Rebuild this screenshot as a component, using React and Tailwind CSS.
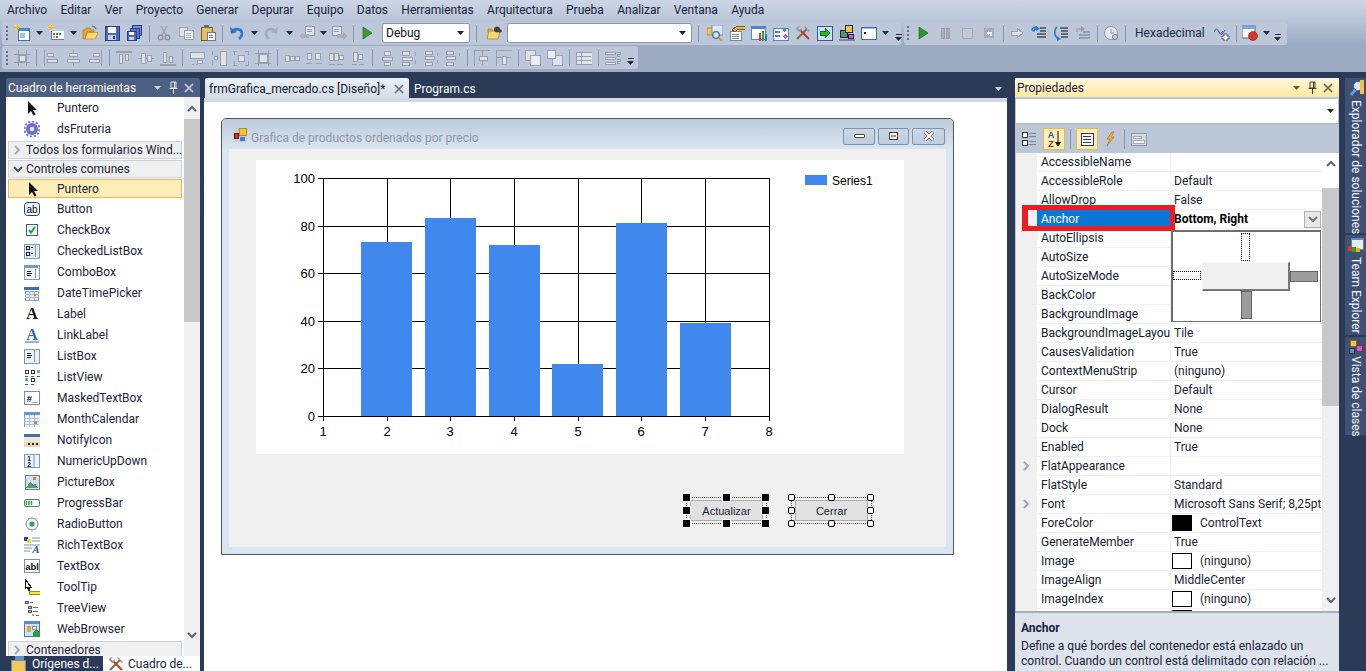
import React from "react";

const Svg = ({ children, w = 16, h = 16 }) => (
  <svg width={w} height={h} viewBox={`0 0 ${w} ${h}`} className="shrink-0 block" shapeRendering="crispEdges">{children}</svg>
);
const Soft = ({ children, w = 16, h = 16 }) => (
  <svg width={w} height={h} viewBox={`0 0 ${w} ${h}`} className="shrink-0 block">{children}</svg>
);

/* ---- toolbar icons ---- */
const NewProj = () => (
  <Svg><rect x="4" y="3" width="11" height="12" fill="#fff" stroke="#3a6ea8" /><rect x="4" y="3" width="11" height="3" fill="#4d86c8" /><rect x="6" y="8" width="5" height="5" fill="#9ec3ea" /><path d="M1 0h4v4H1z" fill="#ffd94a" /><path d="M0 2h6M3 0v5" stroke="#f5b400" /></Svg>
);
const NewItem = () => (
  <Svg><rect x="3" y="4" width="13" height="10" fill="#fff" stroke="#5a7aa5" /><rect x="3" y="4" width="13" height="2" fill="#bcd0ea" /><rect x="5" y="8" width="2" height="2" fill="#e33" /><rect x="8" y="8" width="2" height="2" fill="#2a2" /><rect x="11" y="8" width="2" height="2" fill="#27c" /><rect x="5" y="11" width="2" height="2" fill="#ea2" /><rect x="8" y="11" width="2" height="2" fill="#a3c" /><path d="M1 0h4v4H1z" fill="#ffd94a" /><path d="M0 2h6M3 0v5" stroke="#f5b400" /></Svg>
);
const Folder = () => (
  <Soft><path d="M1 14V5h2l1-2h4l1 2h3v2H5L3 14z" fill="#e3a92e" stroke="#a9781c" strokeWidth=".7" /><path d="M3 14l2.500-6.500H16L13.500 14z" fill="#fbd871" stroke="#b88a25" strokeWidth=".7" /><path d="M10 1c2 0 3 1 4 3" stroke="#3f7ec4" strokeWidth="1.200" fill="none" /></Soft>
);
const Save = () => (
  <Svg><rect x="1" y="1" width="14" height="14" fill="#4f68bd" stroke="#2a3b85" /><rect x="4" y="2" width="8" height="6" fill="#fff" /><rect x="4" y="10" width="8" height="5" fill="#c7cfe5" /><rect x="9" y="11" width="2" height="3" fill="#2a3b85" /></Svg>
);
const SaveAll = () => (
  <Svg><rect x="6" y="0" width="9" height="10" fill="#7d90cf" stroke="#2a3b85" /><rect x="4" y="3" width="9" height="10" fill="#5d74c4" stroke="#2a3b85" /><rect x="1" y="6" width="9" height="9" fill="#4f68bd" stroke="#2a3b85" /><rect x="3" y="7" width="5" height="3" fill="#fff" /><rect x="3" y="12" width="5" height="3" fill="#c7cfe5" /></Svg>
);
const Cut = () => (
  <Soft><path d="M5 1l5 9M11 1L6 10" stroke="#9aa0aa" strokeWidth="1.500" /><circle cx="4.500" cy="12.500" r="2.300" fill="none" stroke="#8b919c" strokeWidth="1.400" /><circle cx="11.500" cy="12.500" r="2.300" fill="none" stroke="#8b919c" strokeWidth="1.400" /></Soft>
);
const Copy = () => (
  <Svg><rect x="1" y="2" width="8" height="9" fill="#dfe3ea" stroke="#9aa0aa" /><rect x="6" y="5" width="9" height="9" fill="#eef0f4" stroke="#9aa0aa" /><path d="M8 8h5M8 10h5M8 12h5" stroke="#a9afb9" /></Svg>
);
const Paste = () => (
  <Svg><rect x="1" y="2" width="11" height="13" fill="#e8c05a" stroke="#7c5a1a" /><rect x="4" y="0" width="5" height="3" fill="#5c6b82" /><rect x="7" y="7" width="8" height="8" fill="#fff" stroke="#6b7a92" /><path d="M9 10h4M9 12h4" stroke="#6b7a92" /></Svg>
);
const Undo = ({ c = "#2b78c9" }) => (
  <Soft><path d="M3 7c2-4 9-4 10 1 .5 2.500-1 4-3 6" fill="none" stroke={c} strokeWidth="2.600" /><path d="M1 2l1 7 6-2z" fill={c} /></Soft>
);
const Redo = () => (
  <Soft><path d="M13 7C11 3 4 3 3 8c-.5 2.500 1 4 3 6" fill="none" stroke="#a4acb9" strokeWidth="2.600" /><path d="M15 2l-1 7-6-2z" fill="#a4acb9" /></Soft>
);
const NavBack = () => (
  <Svg><rect x="6" y="1" width="9" height="9" fill="#e3e6ec" stroke="#8f97a5" /><path d="M8 4h5M8 6h5" stroke="#8f97a5" /><path d="M0 11l4-4v2h6v4H4v2z" fill="#a9b0bc" /></Svg>
);
const NavFwd = () => (
  <Svg><rect x="1" y="1" width="9" height="9" fill="#e3e6ec" stroke="#8f97a5" /><path d="M3 4h5M3 6h5" stroke="#8f97a5" /><path d="M16 11l-4-4v2H6v4h6v2z" fill="#a9b0bc" /></Svg>
);
const Play = ({ c = "#3a9b2f" }) => (
  <Soft><path d="M4 2l9 6-9 6z" fill={c} stroke="#1f6b1a" strokeWidth=".7" /></Soft>
);
const FindFolder = () => (
  <Soft><path d="M1 14l2-8h11l-2 8z" fill="#fbd871" stroke="#a9781c" strokeWidth=".7" /><path d="M2 8V4h4l1 2" fill="#e3a92e" stroke="#a9781c" strokeWidth=".7" /><circle cx="11" cy="4.500" r="3" fill="#444" /><circle cx="14" cy="6" r="1.800" fill="#444" /></Soft>
);
const Magnify = () => (
  <Soft><rect x="0" y="3" width="10" height="7" fill="#f2c453" stroke="#a9781c" strokeWidth=".7" /><rect x="5" y="0" width="11" height="10" fill="#dfe9f6" stroke="#3d6ea8" strokeWidth=".7" /><circle cx="9" cy="10" r="3.300" fill="#cfe6fb" stroke="#49698f" strokeWidth="1.300" /><path d="M11.500 12.500L15 16" stroke="#d39a2b" strokeWidth="2" /></Soft>
);
const HandDoc = () => (
  <Svg><rect x="1" y="6" width="11" height="9" fill="#fff" stroke="#7a8aa0" /><path d="M3 9h7M3 11h7M3 13h7" stroke="#7a8aa0" /><path d="M3 5l5-4h8v3H9L6 7z" fill="#e9b64a" stroke="#7c5a1a" /></Svg>
);
const ChartWin = () => (
  <Svg><rect x="0" y="1" width="14" height="13" fill="#fff" stroke="#5b86bb" /><rect x="0" y="1" width="14" height="3" fill="#4d86c8" /><rect x="8" y="8" width="2" height="8" fill="#e33" /><rect x="11" y="6" width="2" height="10" fill="#2a2" /><rect x="14" y="9" width="2" height="7" fill="#27c" /></Svg>
);
const Sparkle = () => (
  <Svg><rect x="0" y="3" width="15" height="12" fill="#f4f6fa" stroke="#5b86bb" /><rect x="2" y="6" width="5" height="2" fill="#4d86c8" /><rect x="2" y="10" width="5" height="2" fill="#4d86c8" /><path d="M9 5l2-2 2 2-2 2z" fill="#39c" /><path d="M10 11l2-2 3 2-3 3z" fill="#d65bc0" /></Svg>
);
const Tools = () => (
  <Soft><path d="M2 14L12 4" stroke="#8a6a3a" strokeWidth="2" /><path d="M9 2l5 5 1-1-5-5z" fill="#8f97a5" /><path d="M14 14L5 5" stroke="#c0392b" strokeWidth="2" /><path d="M1 4c0-2 2-3 4-3L3 3l2 2 2-2c0 2-1 4-3 4z" fill="#8f97a5" /></Soft>
);
const GreenArrow = () => (
  <Svg><rect x="0" y="1" width="15" height="14" fill="#cfe0f3" stroke="#2d5f9e" /><path d="M3 6h5V3l5 5-5 5v-3H3z" fill="#27b52a" stroke="#14691a" /></Svg>
);
const Blocks = () => (
  <Svg><rect x="1" y="5" width="7" height="7" fill="#4d9c66" stroke="#224" /><rect x="6" y="0" width="7" height="7" fill="#f2c43f" stroke="#224" /><rect x="9" y="9" width="5" height="4" fill="#e85bc0" stroke="#224" /><rect x="0" y="14" width="16" height="2" fill="#7b8696" /></Svg>
);
const Cmd = () => (
  <Svg><rect x="0" y="2" width="15" height="12" fill="#fff" stroke="#3d6ea8" /><rect x="1" y="3" width="13" height="1" fill="#9ec3ea" /><path d="M3 7l2 1-2 1" stroke="#111" fill="none" /></Svg>
);
const Pause = () => (
  <Svg><rect x="4" y="3" width="3" height="10" fill="#a9b0bc" stroke="#98a0ae" /><rect x="9" y="3" width="3" height="10" fill="#a9b0bc" stroke="#98a0ae" /></Svg>
);
const Stop = () => <Svg><rect x="3" y="3" width="10" height="10" fill="#c5cad3" stroke="#a4acb9" /></Svg>;
const Restart = () => (
  <Svg><rect x="3" y="3" width="10" height="10" fill="#a4acb9" /><path d="M11 11V7H8V5L5 8l3 3V9h1v2z" fill="#eef0f4" /></Svg>
);
const ArrowStep = () => <Svg><path d="M2 6h6V3l6 5-6 5v-3H2z" fill="#dfe3ea" stroke="#98a0ae" /></Svg>;
const StepInto = () => (
  <Soft><path d="M6 2c-3 0-5 1-5 3l2 1 1-2h3" fill="none" stroke="#2b78c9" strokeWidth="1.500" /><path d="M9 4L5 1v5z" fill="#2b78c9" /><path d="M9 3h6M9 6h6M6 9h9M6 12h9" stroke="#111" /></Soft>
);
const StepOver = () => (
  <Soft><path d="M4 2C1 4 1 12 5 13" fill="none" stroke="#2b78c9" strokeWidth="1.500" /><path d="M8 14l-4 2v-5z" fill="#2b78c9" /><path d="M7 3h8M8 6h7M8 9h7M8 12h7" stroke="#111" /></Soft>
);
const StepOut = () => (
  <Soft><path d="M2 7V4h5" fill="none" stroke="#98a0ae" strokeWidth="1.500" /><path d="M6 1l4 3-4 3z" fill="#98a0ae" /><path d="M8 7h7M4 10h11M4 13h11" stroke="#6d7480" /></Soft>
);
const ClockSearch = () => (
  <Soft><circle cx="8" cy="8" r="6.500" fill="#e4e7ec" stroke="#8f97a5" /><path d="M8 4v4h3" stroke="#8f97a5" fill="none" /><circle cx="12" cy="12" r="2.500" fill="#cfd5de" stroke="#6d7480" /></Soft>
);
const Wave = () => (
  <Soft><path d="M0 7c2-4 3-4 5 0s3 3 6-2" fill="none" stroke="#2b78c9" strokeWidth="1.200" /><path d="M4 6c2 3 3 3 5 0" fill="none" stroke="#d33" strokeWidth="1" /><path d="M10 9h3v2h2v3h-2v2h-3v-2H8v-3h2z" fill="#eee" stroke="#444" strokeWidth=".8" /></Soft>
);
const Breakpoint = () => (
  <Soft><rect x="0" y="1" width="13" height="12" fill="#fff" stroke="#3d6ea8" /><rect x="0" y="1" width="13" height="3" fill="#7aa7dc" /><circle cx="11" cy="11" r="4.500" fill="#d9332b" stroke="#8c1c17" strokeWidth=".6" /></Soft>
);

/* row two, greyed layout icons */
const G = "#97a0b0";
const Gy = ({ d, fill }) => (
  <Svg><path d={d} fill="none" stroke={G} />{fill && <path d={fill} fill="#dde1e8" stroke={G} />}</Svg>
);
const gridIcons = [
  { d: "M0 4h16M0 12h16M4 0v16M12 0v16", fill: "M5 5h6v6H5z" },
  { d: "M1.500 0v16M1 0v16", fill: "M4 3h6v3H4zM4 9h10v3H4z" },
  { d: "M8 0v16", fill: "M4 3h8v3H4zM2 9h12v3H2z" },
  { d: "M14.500 0v16M14 0v16", fill: "M6 3h6v3H6zM2 9h10v3H2z" },
  { d: "M0 1h16M0 2h16", fill: "M3 4h3v9H3zM9 4h3v6H9z" },
  { d: "M0 8h16", fill: "M3 3h4v10H3zM9 5h4v6H9z" },
  { d: "M0 14h16M0 15h16", fill: "M3 2h3v10H3zM9 6h3v6H9z" },
  { d: "M3 14h2M7 14h2", fill: "M1 2h14v6H1zM8 10h5v3H8z" },
  { d: "M1 1v4M1 10v5", fill: "M9 1h6v14H9zM3 6h3v3H3z" },
  { d: "M0 1h4M12 1h4M0 15h4M12 15h4M1 1v4M15 1v4M1 11v4M15 11v4", fill: "M5 5h6v6H5z" },
  { d: "M0 3h16M0 13h16M3 0v16M13 0v16", fill: "M4 4h8v8H4z" },
  { d: "", fill: "M1 5h4v6H1zM6 6h4v4H6zM11 6h4v4h-4z" },
  { d: "M0 13h6M10 13h6", fill: "M1 3h4v6H1zM9 3h5v6H9z" },
  { d: "M1 14h6M9 14h6", fill: "M1 3h4v7H1zM6 3h4v7H6zM11 5h4v4h-4z" },
  { d: "M2 14h5M9 14h5", fill: "M3 2h4v9H3zM8 4h4v5H8z" },
  { d: "", fill: "M5 1h6v4H5zM3 7h10v3H3zM5 12h6v3H5z" },
  { d: "M14 2v4M14 10v4", fill: "M1 1h7v4H1zM1 7h10v3H1zM1 12h7v3H1z" },
  { d: "M14 3v3M14 10v3", fill: "M2 1h7v3H2zM2 6h9v3H2zM2 12h7v3H2z" },
  { d: "M14 3v3", fill: "M1 1h7v3H1zM1 6h9v3H1zM1 12h7v3H1z" },
];
const CenterH = () => <Svg><rect x="0" y="0" width="16" height="16" fill="none" stroke={G} /><path d="M8 1v14" stroke={G} /><rect x="5" y="6" width="8" height="4" fill="#dde1e8" stroke={G} /></Svg>;
const CenterV = () => <Svg><rect x="0" y="0" width="16" height="16" fill="none" stroke={G} /><path d="M1 7h14" stroke={G} /><rect x="6" y="6" width="4" height="8" fill="#dde1e8" stroke={G} /></Svg>;
const Front = () => <Svg><rect x="0" y="0" width="10" height="10" fill="#dde1e8" stroke={G} /><rect x="5" y="5" width="10" height="10" fill="#e9ecf1" stroke={G} /></Svg>;
const Back = () => <Svg><rect x="5" y="5" width="10" height="10" fill="#dde1e8" stroke={G} /><rect x="0" y="0" width="8" height="8" fill="#e9ecf1" stroke={G} /></Svg>;
const Tabs = () => <Svg><rect x="0" y="2" width="16" height="12" fill="#e0e4eb" stroke={G} /><path d="M1 6h14M1 10h14M5 2v12" stroke={G} /></Svg>;
const TabOrder = () => <Svg><path d="M0 2h10v2H0zM0 7h10v2H0zM0 12h10v2H0z" fill="#e0e4eb" stroke={G} /><path d="M12 2h3v2h-3v2h3M12 9h3v2h-3v2h3" stroke={G} fill="none" /></Svg>;

/* ---- toolbox icons ---- */
const Pointer = () => <Soft><path d="M4 1v13l3-3 2.500 4.500 2-1L9 10h4z" fill="#111" /></Soft>;
const Gear = () => (
  <Soft><circle cx="8" cy="8" r="6" fill="#6a6ed0" /><circle cx="8" cy="8" r="7.500" fill="none" stroke="#7478d8" strokeWidth="2.200" strokeDasharray="2.200 1.700" /><circle cx="8" cy="8" r="2.300" fill="#e8e9fb" /></Soft>
);
const BtnIc = () => (
  <svg width="16" height="14" viewBox="0 0 16 14" className="block"><rect x=".5" y=".5" width="15" height="13" rx="3" fill="#eef3f9" stroke="#1e3f68" /><text x="8" y="11" textAnchor="middle" fontSize="10" fontFamily="Liberation Sans, sans-serif" fill="#111">ab</text></svg>
);
const CheckIc = () => <Soft><rect x="2.500" y="2.500" width="11" height="11" fill="#f4f7fb" stroke="#3d6089" /><path d="M5 8l2 2.500L11 5" fill="none" stroke="#23a02a" strokeWidth="2" /></Soft>;
const CheckList = () => <Svg><rect x="0" y="1" width="15" height="14" fill="#e4ecf5" stroke="#7e9ab9" /><rect x="2" y="3" width="3" height="3" fill="#fff" stroke="#223" /><rect x="2" y="9" width="3" height="3" fill="#fff" stroke="#223" /><path d="M7 4h2M7 10h2" stroke="#223" /><path d="M11 2v12" stroke="#7e9ab9" /></Svg>;
const Combo = () => <Svg><rect x="0" y="1" width="15" height="14" fill="#f2f5f9" stroke="#7e9ab9" /><rect x="1" y="2" width="13" height="2" fill="#7e9ab9" /><path d="M3 7h4M3 9h5M3 11h4" stroke="#111" /><path d="M11 5v9" stroke="#7e9ab9" /></Svg>;
const DateP = () => <Svg><rect x="0" y="2" width="15" height="3" fill="#3d6ea8" /><rect x="1" y="6" width="13" height="9" fill="#e8edf4" stroke="#8fa5bf" /><path d="M1 9h13M1 12h13M5 6v9M10 6v9" stroke="#a9b8cb" /><rect x="10" y="9" width="2" height="2" fill="#e06a3a" /></Svg>;
const LabelA = ({ c = "#111", u }) => (
  <svg width="16" height="16" viewBox="0 0 16 16" className="block"><text x="8" y="13" textAnchor="middle" fontSize="16" fontWeight="700" fontFamily="Liberation Serif, serif" fill={c}>A</text>{u && <path d="M1 15h14" stroke={c} />}</svg>
);
const ListB = () => <Svg><rect x="0" y="1" width="15" height="14" fill="#eef2f7" stroke="#7e9ab9" /><path d="M3 5h4M3 7h5M3 9h4" stroke="#111" /><path d="M10 2v12" stroke="#7e9ab9" /></Svg>;
const ListV = () => <Svg><rect x="1" y="1" width="3" height="3" fill="#fff" stroke="#333" /><rect x="7" y="1" width="3" height="3" fill="#fff" stroke="#333" /><rect x="13" y="1" width="3" height="3" fill="#6ac" /><rect x="1" y="9" width="3" height="3" fill="#6ac" /><rect x="7" y="9" width="3" height="3" fill="#fff" stroke="#333" /><path d="M1 7h3M7 7h3M13 7h3M1 15h3M7 15h3" stroke="#556" /></Svg>;
const TxtBox = ({ t }) => (
  <svg width="16" height="14" viewBox="0 0 16 14" className="block"><rect x=".5" y=".5" width="15" height="13" fill="#fff" stroke="#7e8ea5" /><text x="8" y="10.500" textAnchor="middle" fontSize="9.500" fontWeight="700" fontFamily="Liberation Sans, sans-serif" fill="#111">{t}</text></svg>
);
const MonthC = () => <Svg><rect x="0" y="1" width="16" height="15" fill="#eaf0f7" stroke="#8ea6c6" /><rect x="0" y="1" width="16" height="3" fill="#6a94cc" /><path d="M1 7h14M1 10h14M1 13h14M5 4v12M10 4v12" stroke="#b2c2d6" /><rect x="10" y="10" width="3" height="3" fill="#e0763d" /></Svg>;
const Notify = () => <Svg><rect x="0" y="2" width="16" height="3" fill="#3d6ea8" /><rect x="0" y="5" width="16" height="5" fill="#f1e9cf" /><rect x="0" y="10" width="16" height="5" fill="#e6d9b0" /><rect x="4" y="11" width="2" height="2" fill="#224" /><rect x="8" y="11" width="2" height="2" fill="#224" /><rect x="12" y="11" width="2" height="2" fill="#224" /></Svg>;
const Numeric = () => (
  <svg width="16" height="16" viewBox="0 0 16 16" className="block"><rect x=".5" y="1.500" width="15" height="13" fill="#eef2f7" stroke="#7e9ab9" /><text x="5" y="7.500" textAnchor="middle" fontSize="6.500" fontWeight="700" fontFamily="Liberation Sans, sans-serif" fill="#111">1</text><text x="5" y="13.500" textAnchor="middle" fontSize="6.500" fontWeight="700" fontFamily="Liberation Sans, sans-serif" fill="#111">2</text><path d="M10 2v12" stroke="#7e9ab9" /></svg>
);
const PicBox = () => <Svg><rect x="1" y="1" width="14" height="14" fill="#cfe3f4" stroke="#6d8098" /><path d="M2 14l4-6 3 3 2-2 3 5z" fill="#5c9c5a" /><rect x="9" y="3" width="3" height="3" fill="#e8743b" /></Svg>;
const Progress = () => <Soft><rect x=".5" y="4.500" width="15" height="7" rx="2" fill="#fff" stroke="#5a6d80" /><path d="M2.500 6v4M5 6v4M7.500 6v4" stroke="#2fb534" strokeWidth="1.600" /></Soft>;
const Radio = () => <Soft><circle cx="8" cy="8" r="6" fill="#f4f7fb" stroke="#6d859f" /><circle cx="8" cy="8" r="2.600" fill="#3ba344" /></Soft>;
const Rich = () => (
  <svg width="16" height="16" viewBox="0 0 16 16" className="block"><rect x="0" y="0" width="4" height="4" fill="#1a3fd1" /><rect x="3" y="2" width="4" height="4" fill="#f2d21e" /><path d="M8 1h8M8 4h8M0 8h16M0 11h8M0 14h6" stroke="#7f92ab" /><text x="12" y="15.500" textAnchor="middle" fontSize="11" fontWeight="700" fontStyle="italic" fontFamily="Liberation Serif, serif" fill="#2a5aa8">A</text></svg>
);
const TipIc = () => <Svg><path d="M1 0v10l2-2 2 4 1-1-2-3h3z" fill="#fff" stroke="#111" /><rect x="5" y="12" width="11" height="3" fill="#f2e63a" stroke="#9a8c10" /></Svg>;
const Tree = () => <Svg><rect x="1" y="1" width="3" height="2" fill="#aab8c8" stroke="#556" /><rect x="4" y="6" width="3" height="2" fill="#aab8c8" stroke="#556" /><rect x="4" y="10" width="3" height="2" fill="#aab8c8" stroke="#556" /><rect x="8" y="14" width="2" height="2" fill="#d2a030" /><path d="M6 2h3M9 7h5M9 11h5M12 15h3" stroke="#667" /></Svg>;
const WebB = () => <Svg><rect x="0" y="0" width="15" height="15" fill="#cfe0f3" stroke="#4c78ad" /><rect x="0" y="0" width="15" height="3" fill="#5d8cc8" /><rect x="3" y="5" width="4" height="6" fill="#e0a63a" /><rect x="8" y="5" width="4" height="3" fill="#f1f4f8" stroke="#889" /><circle cx="12.500" cy="12.500" r="3.500" fill="#2f9a4a" /></Svg>;

const Caret = ({ c = "#1b2a41" }) => (
  <svg width="7" height="4" viewBox="0 0 7 4" className="block shrink-0"><path d="M0 0h7L3.500 4z" fill={c} /></svg>
);
const Chev = ({ d = "down", c = "#5c6472" }) => (
  <svg width="10" height="7" viewBox="0 0 10 7" className="block shrink-0">
    <path d={d === "down" ? "M1 1l4 4 4-4" : "M1 6l4-4 4 4"} fill="none" stroke={c} strokeWidth="2" />
  </svg>
);
const ChevR = ({ c = "#a0a4ab" }) => (
  <svg width="7" height="10" viewBox="0 0 7 10" className="block shrink-0"><path d="M1 1l4 4-4 4" fill="none" stroke={c} strokeWidth="1.800" /></svg>
);
const Pin = ({ c }) => (
  <svg width="9" height="13" viewBox="0 0 9 13" className="block shrink-0"><path d="M2 1h5v6H2zM0.500 7.500h8M4.500 8v5M5.500 1v6" fill="none" stroke={c} /></svg>
);
const X = ({ c }) => (
  <svg width="10" height="10" viewBox="0 0 10 10" className="block shrink-0"><path d="M1 1l8 8M9 1l-8 8" stroke={c} strokeWidth="1.700" /></svg>
);
const Overflow = () => (
  <div className="flex flex-col items-center gap-[2px] pt-[8px]">
    <div className="w-[6px] h-px bg-[#1b2a41]" />
    <Caret />
  </div>
);
const Grip = () => (
  <div className="w-[3px] h-[14px] shrink-0 flex flex-col justify-between">
    {[0, 1, 2, 3].map((i) => <div key={i} className="w-[2px] h-[2px] bg-[#5f6e87]" />)}
  </div>
);
const Sep = ({ ml = "mx-[2.500px]" }) => <div className={`w-px h-[17px] bg-[#8895aa] shrink-0 ${ml}`} />;
const I = ({ children }) => <div className="w-[22px] flex justify-center shrink-0">{children}</div>;
const Ar = ({ w = "w-[12px]" }) => <div className={`${w} flex justify-center shrink-0`}><Caret /></div>;
const ComboT = ({ w, text }) => (
  <div className={`${w} h-[20px] bg-white border border-[#8b98ac] rounded-[2px] flex items-center shrink-0 pl-[3px] pr-[5px] text-[#111]`}>
    <span className="flex-1 leading-none">{text}</span>
    <Caret c="#222" />
  </div>
);

const MENUS = ["Archivo", "Editar", "Ver", "Proyecto", "Generar", "Depurar", "Equipo", "Datos", "Herramientas", "Arquitectura", "Prueba", "Analizar", "Ventana", "Ayuda"];

const TOOLBOX = [
  ["Button", <BtnIc />], ["CheckBox", <CheckIc />], ["CheckedListBox", <CheckList />], ["ComboBox", <Combo />],
  ["DateTimePicker", <DateP />], ["Label", <LabelA />], ["LinkLabel", <LabelA c="#2a6bc4" u />], ["ListBox", <ListB />],
  ["ListView", <ListV />], ["MaskedTextBox", <TxtBox t="#_" />], ["MonthCalendar", <MonthC />], ["NotifyIcon", <Notify />],
  ["NumericUpDown", <Numeric />], ["PictureBox", <PicBox />], ["ProgressBar", <Progress />], ["RadioButton", <Radio />],
  ["RichTextBox", <Rich />], ["TextBox", <TxtBox t="abl" />], ["ToolTip", <TipIc />], ["TreeView", <Tree />], ["WebBrowser", <WebB />],
];

const ToolRow = ({ icon, text }) => (
  <div className="h-[21px] flex items-center shrink-0">
    <div className="flex justify-center shrink-0 w-[50px] ml-[1px]">{icon}</div>
    <span className="text-[#1a2438]">{text}</span>
  </div>
);
const Group = ({ open, text, cls }) => (
  <div className={`h-[18px] mx-[2px] bg-[#f0f0f0] border border-[#c9d2e0] flex items-center shrink-0 ${cls}`}>
    <div className="w-[17px] flex justify-center shrink-0">
      {open ? <Chev c="#4a4f58" /> : <ChevR />}
    </div>
    <span className="whitespace-nowrap text-[#1a2438]">{text}</span>
  </div>
);

const PROPS = [
  ["AccessibleName", ""], ["AccessibleRole", "Default"], ["AllowDrop", "False"], ["Anchor", "Bottom, Right"],
  ["AutoEllipsis", ""], ["AutoSize", ""], ["AutoSizeMode", ""], ["BackColor", ""], ["BackgroundImage", "", "w"],
  ["BackgroundImageLayou", "Tile"], ["CausesValidation", "True"], ["ContextMenuStrip", "(ninguno)"], ["Cursor", "Default"],
  ["DialogResult", "None"], ["Dock", "None"], ["Enabled", "True"], ["FlatAppearance", "", null, 1], ["FlatStyle", "Standard"],
  ["Font", "Microsoft Sans Serif; 8,25pt", null, 1], ["ForeColor", "ControlText", "b"], ["GenerateMember", "True"],
  ["Image", "(ninguno)", "w"], ["ImageAlign", "MiddleCenter"], ["ImageIndex", "(ninguno)", "w"], ["", "", "w"],
];

const PropRow = ({ p }) => {
  const [name, value, sw, exp] = p;
  const anchor = name === "Anchor";
  return (
    <div className="h-[19px] flex shrink-0 border-b border-[#f0f0f0] box-border">
      <div className="w-[21px] bg-[#f0f0f0] flex items-center justify-center shrink-0">{exp ? <ChevR /> : null}</div>
      <div className={`w-[133px] pl-[4px] flex items-center overflow-hidden whitespace-nowrap shrink-0 ${anchor ? "bg-[#0a76d6] text-white" : "text-[#111c30]"}`}>{name}</div>
      <div className="w-px bg-[#f0f0f0] shrink-0" />
      <div className={`flex-1 flex items-center whitespace-nowrap text-[#1a2438] ${sw ? "pl-[1px]" : "pl-[3px]"} ${anchor ? "font-bold text-black" : ""}`}>
        {sw && <div className={`w-[20px] h-[16px] border border-black shrink-0 mr-[8px] ${sw === "b" ? "bg-black" : "bg-white"}`} />}
        <span className="flex-1">{value}</span>
        {anchor && <div className="w-[17px] h-[17px] bg-[#e8e8e8] border border-[#b0b0b0] flex items-center justify-center mr-[1px]"><Chev c="#777" /></div>}
      </div>
    </div>
  );
};

const Chart = () => {
  const xs = [323, 387, 450, 514, 578, 641, 705, 769];
  const ys = [178, 226, 273, 321, 368, 416];
  const bars = [[361, 242], [425, 218], [489, 245], [552, 364], [616, 223], [680, 323]];
  return (
    <svg width="648" height="294" viewBox="256 160 648 294" className="block" fontFamily="Liberation Sans, sans-serif" fontSize="13" fill="#000">
      <g shapeRendering="crispEdges">
        {xs.map((x) => <path key={x} d={`M${x + 0.5} 178V421`} stroke="#000" />)}
        {ys.map((y) => <path key={y} d={`M318 ${y + 0.5}H770`} stroke="#000" />)}
        {bars.map(([x, y]) => <rect key={x} x={x} y={y} width="51" height={416 - y} fill="#4188ee" />)}
        <rect x="805" y="175" width="22" height="10" fill="#4188ee" />
      </g>
      {[100, 80, 60, 40, 20, 0].map((v, i) => <text key={v} x="315" y={ys[i] + 5} textAnchor="end" fontSize="13">{v}</text>)}
      {[1, 2, 3, 4, 5, 6, 7, 8].map((v, i) => <text key={v} x={xs[i]} y="436" textAnchor="middle" fontSize="13">{v}</text>)}
      <text x="832" y="185" fontSize="12">Series1</text>
    </svg>
  );
};

const Handle = ({ cls, white }) => (
  <div className={`absolute w-[7px] h-[7px] border ${white ? "bg-white border-black rounded-[2px]" : "bg-black border-black outline outline-1 outline-white"} ${cls}`} />
);
const DesignBtn = ({ text, white, cls }) => (
  <div className={`relative w-[73px] h-[21px] ${cls}`}>
    <div className="absolute -inset-x-[4px] -inset-y-[3px] border border-dotted border-[#555]" />
    <div className="absolute inset-0 bg-[#e1e1e1] border border-[#adadad] flex items-center justify-center text-[11px] text-[#1a2438] font-['Liberation_Sans',sans-serif]">{text}</div>
    <Handle white={white} cls="-left-[7px] -top-[6px]" />
    <Handle white={white} cls="left-[33px] -top-[6px]" />
    <Handle white={white} cls="-right-[6px] -top-[6px]" />
    <Handle white={white} cls="-left-[7px] top-[7px]" />
    <Handle white={white} cls="-right-[6px] top-[7px]" />
    <Handle white={white} cls="-left-[7px] -bottom-[6px]" />
    <Handle white={white} cls="left-[33px] -bottom-[6px]" />
    <Handle white={white} cls="-right-[6px] -bottom-[6px]" />
  </div>
);
const WinBtn = ({ w, children }) => (
  <div className={`${w} h-[17px] border border-[#7f93ab] rounded-[2px] bg-gradient-to-b from-[#cbd7e5] to-[#bfcde0] flex items-center justify-center`}>{children}</div>
);

const SideTab = ({ icon, text, cls, textCls = "mt-[4px]" }) => (
  <div className={`w-[21px] bg-[#3f5173] flex flex-col items-center shrink-0 pt-[2px] ${cls}`}>
    {icon}
    <span className={`[writing-mode:vertical-rl] whitespace-nowrap text-[#f1f4f9] ${textCls}`}>{text}</span>
  </div>
);

export default function App() {
  return (
    <div className="w-[1366px] h-[671px] overflow-hidden bg-[#2a3a57] flex flex-col text-[12px] leading-[16px] font-['Roboto','Noto_Sans',sans-serif]">
      {/* menu + toolbars */}
      <div className="h-[72px] shrink-0 bg-[#9dabc2] flex flex-col">
        <div className="h-[20px] shrink-0 bg-gradient-to-b from-[#cdd6e5] to-[#b9c5d8] flex items-center pl-[7px] gap-[13.300px] text-[#16233c]">
          {MENUS.map((m) => <span key={m}>{m}</span>)}
        </div>
        <div className="h-[25px] shrink-0 bg-gradient-to-b from-[#b9c5d8] to-[#9dabc2] flex items-center pt-px pl-[2px] gap-[2px]">
          <div className="w-[899px] h-[23px] bg-[#bcc8da] rounded-[3px] flex items-center pl-[4px] shrink-0">
            <Grip />
            <div className="w-[2px] shrink-0" />
            <I><NewProj /></I><Ar w="w-[12px]" /><I><NewItem /></I><Ar /><I><Folder /></I><I><Save /></I><I><SaveAll /></I>
            <Sep ml="mx-[3.500px]" /><I><Cut /></I><I><Copy /></I><I><Paste /></I>
            <Sep ml="mx-[3px]" /><I><Undo /></I><Ar /><I><Redo /></I><Ar w="w-[14px]" /><I><NavBack /></I><Ar w="w-[10px]" /><I><NavFwd /></I>
            <Sep /><I><Play /></I>
            <div className="w-[4px] shrink-0" />
            <ComboT w="w-[88px]" text="Debug" />
            <Sep ml="mx-[6px]" /><I><FindFolder /></I>
            <div className="w-[2px] shrink-0" />
            <ComboT w="w-[185px]" text="" />
            <Sep ml="mx-[5.500px]" />
            <I><Magnify /></I><I><HandDoc /></I><I><ChartWin /></I><I><Sparkle /></I><I><Tools /></I><I><GreenArrow /></I><I><Blocks /></I><I><Cmd /></I>
            <Ar w="w-[10px]" />
            <div className="w-[5px] shrink-0" />
            <Overflow />
          </div>
          <div className="w-[383px] h-[23px] bg-[#bcc8da] rounded-[3px] flex items-center pl-[3px] shrink-0 ml-[1px]">
            <Grip />
            <div className="w-[2px] shrink-0" />
            <I><Play c="#2f9a2a" /></I><I><Pause /></I><I><Stop /></I><I><Restart /></I>
            <Sep /><I><ArrowStep /></I><I><StepInto /></I><I><StepOver /></I><I><StepOut /></I>
            <Sep /><I><ClockSearch /></I>
            <Sep ml="mx-[3px]" />
            <span className="w-[82px] pl-[6px] shrink-0 text-[#1d2a40] whitespace-nowrap">Hexadecimal</span>
            <I><Wave /></I>
            <Sep /><I><Breakpoint /></I><Ar w="w-[10px]" />
            <div className="w-[3px] shrink-0" />
            <Overflow />
          </div>
        </div>
        <div className="h-[25px] shrink-0 flex items-center pl-[2px]">
          <div className="w-[636px] h-[23px] bg-[#bcc8da] rounded-[3px] flex items-center pl-[4px]">
            <Grip />
            <div className="w-[2px] shrink-0" />
            {gridIcons.map((g, i) => (
              <React.Fragment key={i}>
                {[1, 4, 7, 11, 15].includes(i) && <Sep ml="mx-[3px]" />}
                <I><Gy d={g.d} fill={g.fill} /></I>
              </React.Fragment>
            ))}
            <Sep ml="mx-[3px]" /><I><CenterH /></I><I><CenterV /></I>
            <Sep ml="mx-[3px]" /><I><Front /></I><I><Back /></I>
            <Sep ml="mx-[3px]" /><I><Tabs /></I>
            <Sep ml="mx-[3px]" /><I><TabOrder /></I>
            <div className="w-[3px] shrink-0" />
            <Overflow />
          </div>
        </div>
      </div>

      {/* body */}
      <div className="flex-1 min-h-0 flex pt-[6px]">
        {/* toolbox */}
        <div className="w-[194px] ml-[6px] shrink-0 flex flex-col">
          <div className="h-[19px] shrink-0 bg-[#4d6082] rounded-t-[2px] flex items-center pl-[2px] pr-[6px] text-white">
            <span className="flex-1 whitespace-nowrap">Cuadro de herramientas</span>
            <Caret c="#c9d3e2" />
            <div className="w-[8px]" /><Pin c="#dfe6f0" />
            <div className="w-[6px]" /><X c="#c9d3e2" />
          </div>
          <div className="h-[559px] shrink-0 flex overflow-hidden">
            <div className="w-[178px] bg-white flex flex-col shrink-0">
              <ToolRow icon={<Pointer />} text="Puntero" />
              <ToolRow icon={<Gear />} text="dsFruteria" />
              <Group text="Todos los formularios Wind..." cls="mt-[2px]" />
              <Group open text="Controles comunes" cls="mt-[1px]" />
              <div className="mx-[2px] h-[19px] mt-[1px] bg-[#fdedb8] border border-[#e8b94f] flex items-center shrink-0">
                <div className="w-[48px] flex justify-center shrink-0"><Pointer /></div>
                <span className="text-[#1a2438]">Puntero</span>
              </div>
              {TOOLBOX.map(([t, ic]) => <ToolRow key={t} icon={ic} text={t} />)}
              <Group text="Contenedores" cls="mt-[2px]" />
            </div>
            <div className="flex-1 bg-[#f0f0f0] flex flex-col items-center">
              <div className="h-[22px] flex items-center shrink-0"><Chev d="up" /></div>
              <div className="w-full h-[203px] bg-[#c8c8c8] shrink-0" />
              <div className="flex-1" />
              <div className="h-[24px] flex items-start shrink-0"><Chev /></div>
            </div>
          </div>
          <div className="flex-1 flex items-stretch pl-[4px] text-white text-[12px]">
            <div className="w-[93px] flex items-center gap-[5px] pl-[1px] whitespace-nowrap overflow-hidden">
              <Svg><rect x="0" y="4" width="14" height="12" fill="#f1c95a" stroke="#6b8db5" /><rect x="4" y="0" width="9" height="5" fill="#5f8fc9" /></Svg>
              <span>Orígenes d...</span>
            </div>
            <div className="flex-1 bg-white text-[#14213a] flex items-center gap-[4px] pl-[5px] whitespace-nowrap overflow-hidden">
              <Tools />
              <span>Cuadro de...</span>
            </div>
          </div>
        </div>

        {/* document */}
        <div className="w-[805px] ml-[4px] shrink-0 flex flex-col">
          <div className="h-[20px] shrink-0 flex items-stretch pl-[1px]">
            <div className="w-[204px] pt-px bg-gradient-to-b from-[#eef1f6] to-[#d5dbe6] rounded-t-[2px] flex items-center pl-[4px] pr-[5px] text-[#0f1a2c] whitespace-nowrap">
              <span className="flex-1">frmGrafica_mercado.cs [Diseño]*</span>
              <X c="#6a7280" />
            </div>
            <div className="pl-[5px] pt-px flex items-center text-white flex-1 whitespace-nowrap">
              <span className="flex-1">Program.cs</span>
              <div className="mr-[7px]"><Caret c="#c9d3e2" /></div>
            </div>
          </div>
          <div className="h-[4px] shrink-0 bg-[#d3d9e4] mr-[2px]" />
          <div className="flex-1 bg-white mr-[2px] pl-[17px] pt-[16px]">
            {/* designer form */}
            <div className="w-[733px] h-[437px] border border-[#555] rounded-t-[5px] bg-[#d8e5f2] flex flex-col px-[7px] pb-[7px]">
              <div className="h-[30px] shrink-0 -mx-[7px] px-[11px] pt-[4px] rounded-t-[4px] bg-gradient-to-b from-[#bccbdc] to-[#dae5f1] flex items-center">
                <Svg><rect x="0" y="0" width="14" height="14" fill="#c9cdd4" /><rect x="6" y="0" width="7" height="7" fill="#f2c43f" stroke="#b58a1d" /><rect x="1" y="5" width="4" height="5" fill="#d42a2a" stroke="#701010" /><rect x="7" y="9" width="5" height="4" fill="#3f7ad0" /></Svg>
                <span className="ml-[2px] mt-[3px] text-[#8d96a4] whitespace-nowrap">Grafica de productos ordenados por precio</span>
                <div className="flex-1" />
                <div className="flex gap-[3px] mr-[-3px]">
                  <WinBtn w="w-[32px]"><div className="w-[11px] h-[4px] border border-[#444] rounded-[1px] bg-white" /></WinBtn>
                  <WinBtn w="w-[31px]"><div className="w-[9px] h-[8px] border border-[#444] bg-white flex items-center justify-center"><div className="w-[5px] h-[2px] bg-[#7f93ab]" /></div></WinBtn>
                  <WinBtn w="w-[33px]"><svg width="12" height="10" viewBox="0 0 12 10" className="block"><path d="M2 1l8 8M10 1L2 9" stroke="#666" strokeWidth="3.600" /><path d="M2 1l8 8M10 1L2 9" stroke="#fff" strokeWidth="1.800" /></svg></WinBtn>
                </div>
              </div>
              <div className="flex-1 bg-[#f0f0f0] flex flex-col pl-[27px] pt-[11px]">
                <div className="w-[648px] h-[294px] bg-white shrink-0"><Chart /></div>
                <div className="flex pl-[434px] mt-[46px]">
                  <DesignBtn text="Actualizar" />
                  <DesignBtn text="Cerrar" white cls="ml-[32px]" />
                </div>
              </div>
            </div>
          </div>
        </div>

        {/* properties */}
        <div className="relative w-[324px] ml-[6px] shrink-0 bg-[#bcc7d8] flex flex-col">
          <div className="h-[19px] shrink-0 bg-gradient-to-b from-[#fff8e0] to-[#ffe79f] flex items-center pl-[2px] pr-[6px] text-[#17233a]">
            <span className="flex-1">Propiedades</span>
            <Caret c="#6c5a2a" />
            <div className="w-[8px]" /><Pin c="#4a3d1a" />
            <div className="w-[6px]" /><X c="#6c6040" />
          </div>
          <div className="h-[25px] shrink-0 bg-white mt-[2px] mx-[1px] flex items-center justify-end pr-[4px] border-b border-[#aeb8c8]"><Caret c="#222" /></div>
          <div className="h-[29px] shrink-0 flex items-center pl-[5px] gap-[3px]">
            <div className="w-[20px] flex justify-center"><Svg><rect x="0" y="1" width="5" height="5" fill="#fff" stroke="#333" /><rect x="0" y="9" width="5" height="5" fill="#fff" stroke="#333" /><path d="M7 2h7M7 5h7M7 10h7M7 13h7" stroke="#7a8494" /></Svg></div>
            <div className="w-[22px] h-[22px] bg-[#fdedb8] border border-[#e8b94f] flex items-center justify-center">
              <svg width="16" height="18" viewBox="0 0 16 18" className="block"><text x="5" y="8" textAnchor="middle" fontSize="9" fontWeight="700" fontFamily="Liberation Sans, sans-serif" fill="#2353a8">A</text><text x="5" y="17" textAnchor="middle" fontSize="9" fontWeight="700" fontFamily="Liberation Sans, sans-serif" fill="#8f2a2a">Z</text><path d="M12 1v14M9.500 12l2.500 4 2.500-4" fill="#111" stroke="#111" /></svg>
            </div>
            <div className="w-px h-[20px] bg-[#8895aa] mx-[2px]" />
            <div className="w-[22px] h-[22px] bg-[#fdedb8] border border-[#e8b94f] flex items-center justify-center">
              <Svg><rect x="2" y="2" width="12" height="12" fill="#fff" stroke="#2a3b6b" /><path d="M4 5h8M4 8h8M4 11h8" stroke="#2a3b6b" /></Svg>
            </div>
            <div className="w-[18px] flex justify-center"><Soft><path d="M10 1L5 8h3l-3 7 7-9H9l3-5z" fill="#f0b82e" stroke="#a8602a" strokeWidth=".6" /></Soft></div>
            <div className="w-px h-[20px] bg-[#8895aa] mx-[2px]" />
            <div className="w-[18px] flex justify-center"><Svg><rect x="0" y="2" width="15" height="12" fill="#d4d9e2" stroke="#8f97a5" /><rect x="2" y="5" width="8" height="2" fill="#fff" stroke="#a4acb9" /><rect x="2" y="9" width="11" height="3" fill="#eef0f4" stroke="#a4acb9" /></Svg></div>
          </div>
          <div className="h-[458px] shrink-0 flex overflow-hidden pl-[1px]">
            <div className="w-[306px] shrink-0 bg-white flex flex-col overflow-hidden">
              {PROPS.map((p, i) => <PropRow key={i} p={p} />)}
            </div>
            <div className="flex-1 bg-[#f0f0f0] flex flex-col items-center">
              <div className="h-[35px] w-full bg-white flex items-start justify-center pt-[7px] shrink-0"><Chev d="up" /></div>
              <div className="w-full h-[218px] bg-[#c8c8c8] shrink-0" />
              <div className="flex-1" />
              <div className="h-[14px] shrink-0 flex items-start"><Chev /></div>
            </div>
          </div>
          <div className="flex-1 bg-[#dee2eb] border-t-2 border-[#a6adb9] pl-[6px] pt-[7px] text-[#15233b] whitespace-nowrap">
            <div className="font-bold">Anchor</div>
            <div className="mt-[3px] leading-[15px]">Define a qué bordes del contenedor está enlazado un</div>
            <div className="leading-[15px]">control. Cuando un control está delimitado con relación ...</div>
          </div>

          {/* red annotation over the Anchor row */}
          <div className="absolute left-[7px] top-[127px] w-[153px] h-[26px] border-[5px] border-[#ed1c24] border-l-[6px]" />
          {/* anchor editor dropdown */}
          <div className="absolute left-[156px] top-[152px] w-[150px] h-[92px] bg-white border-2 border-[#6e6e6e] border-r border-b">
            <div className="absolute left-[68px] top-[1px] w-[9px] h-[28px] border border-dotted border-black bg-white" />
            <div className="absolute left-[0px] top-[39px] w-[28px] h-[9px] border border-dotted border-black bg-white" />
            <div className="absolute left-[29px] top-[30px] w-[88px] h-[29px] bg-[#f0f0f0] border-t border-l border-[#f8f8f8] border-r-2 border-b-2 border-r-[#777] border-b-[#777]" />
            <div className="absolute left-[117px] top-[39px] w-[28px] h-[11px] bg-[#9c9c9c] border border-[#666]" />
            <div className="absolute left-[68px] top-[59px] w-[11px] h-[28px] bg-[#9c9c9c] border border-[#666]" />
          </div>
        </div>

        {/* right rail */}
        <div className="flex-1 ml-[5px] flex flex-col items-end gap-[2px]">
          <SideTab cls="h-[155px]" text="Explorador de soluciones" icon={<Soft><path d="M2 14l5-6 2 2-5 6z" fill="#5aa5e0" /><circle cx="10" cy="6" r="4.500" fill="#dfeaf7" stroke="#3d6ea8" /><rect x="12" y="0" width="4" height="14" fill="#f2c43f" /></Soft>} />
          <SideTab cls="h-[100px]" text="Team Explorer" icon={<Svg><rect x="3" y="1" width="12" height="11" fill="#e4ecf5" stroke="#6d8098" /><rect x="3" y="1" width="12" height="2" fill="#5d8cc8" /><rect x="0" y="9" width="4" height="5" fill="#d33" /><rect x="4" y="10" width="4" height="5" fill="#2a2" /><rect x="8" y="11" width="4" height="4" fill="#ea2" /></Svg>} />
          <SideTab cls="h-[98px]" textCls="mt-[1px]" text="Vista de clases" icon={<Svg><rect x="2" y="1" width="6" height="6" fill="#f2c43f" stroke="#8a6a1a" /><rect x="8" y="6" width="6" height="6" fill="#d65bc0" stroke="#6a2a6a" /><rect x="1" y="9" width="5" height="5" fill="#5d8cc8" stroke="#234" /></Svg>} />
        </div>
      </div>
    </div>
  );
}
